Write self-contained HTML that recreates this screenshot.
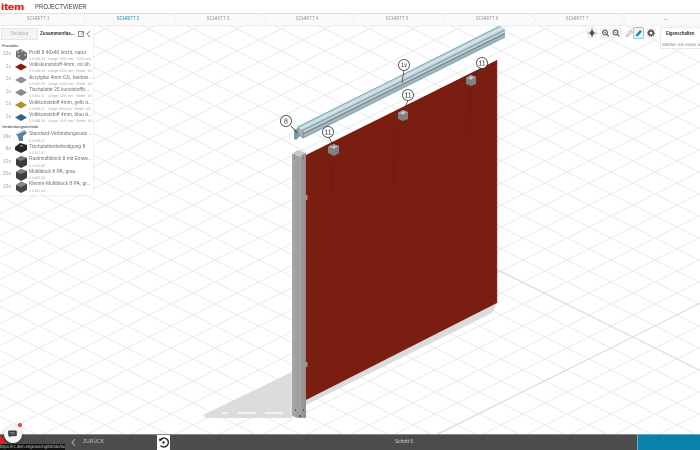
<!DOCTYPE html>
<html>
<head>
<meta charset="utf-8">
<style>
html,body{margin:0;padding:0;width:700px;height:450px;overflow:hidden;background:#fff;font-family:"Liberation Sans",sans-serif}
.a{position:absolute;white-space:nowrap}
#stage{position:absolute;left:0;top:0;width:700px;height:450px;overflow:hidden}
.tab{position:absolute;top:16px;width:60px;text-align:center;font-size:5.2px;color:#909090;line-height:7px;transform:scaleX(.85)}
.q{position:absolute;width:11px;left:0;text-align:right;font-size:5.2px;color:#a0a0a0;line-height:7px}
.t{position:absolute;left:29px;font-size:5.7px;color:#6e6e6e;line-height:7px;white-space:nowrap;width:72px;overflow:hidden;transform-origin:0 50%;transform:scaleX(.87)}
.s{position:absolute;left:29px;font-size:3.4px;color:#a8a8a8;line-height:4px;white-space:nowrap;width:63px;overflow:hidden}
.h{position:absolute;left:2px;font-size:3.8px;font-weight:bold;color:#666;line-height:5px}
</style>
</head>
<body>
<div id="stage">
<svg class="a" style="left:0;top:0" width="700" height="450" viewBox="0 0 700 450">
<defs>
<pattern id="g" patternUnits="userSpaceOnUse" x="633" y="337" width="44" height="22">
<path d="M0 0L44 22M0 22L44 0" stroke="#e7e7e7" stroke-width=".8" fill="none"/>
</pattern>
<linearGradient id="post" x1="0" x2="1" y1="0" y2="0">
<stop offset="0" stop-color="#a6a7a8"/><stop offset=".5" stop-color="#9c9d9e"/><stop offset="1" stop-color="#909192"/>
</linearGradient>
</defs>
<rect width="700" height="450" fill="#fff"/>
<rect width="700" height="450" fill="url(#g)"/>
<path d="M497 270L633 337L700 370.500M425 440L633 337L700 303" stroke="#d6d6d6" stroke-width=".8" fill="none"/>
<!-- shadows -->
<path d="M292 372L203 415L206 418L292 418Z" fill="#dcdcdc"/>
<path d="M306 400L306 405L492 313L497 303Z" fill="#dcdcdc"/>
<path d="M222 413h6M238 413h18M265 413h18" stroke="#fff" stroke-width="1.2"/>
<!-- panel -->
<path d="M306 155L497 60L497 303L306 400Z" fill="#7b1e12"/>
<path d="M497 60L497 303" stroke="#8f3a2e" stroke-width=".5"/>
<path d="M395 125L394 190M470 88L469 140M333 160L332 195" stroke="#6a170d" stroke-width="4" opacity=".25"/>
<!-- post -->
<path d="M292 154L298 150L306 153L306 418L298 418L292 416Z" fill="url(#post)"/>
<path d="M292 154L298 150L306 153L300 157Z" fill="#c7c8c9"/>
<path d="M300 157L300 418" stroke="#b6b7b8" stroke-width=".6"/>
<path d="M294 155h1M303 155h1M294 158h1M303 158h1" stroke="#555" stroke-width="1"/>
<rect x="305" y="195" width="2.5" height="5" fill="#999"/>
<rect x="305" y="362" width="2.5" height="5" fill="#999"/>
<path d="M295 410h1M303 410h1M299 416h2" stroke="#444" stroke-width="1.4"/>
<!-- rail -->
<path d="M298 127L500 26L505 30L505 37L304 138L298 134Z" fill="#a9b3b8"/>
<path d="M298 127L500 26L505 29L303 130Z" fill="#c9d5da"/>
<path d="M298 127L500 26M303 130L505 30M303 138L505 37" stroke="#6fadc2" stroke-width="1" fill="none"/>
<path d="M303 134L505 33.500" stroke="#7a8489" stroke-width="1"/>
<path d="M303 132L505 31.500" stroke="#dde4e7" stroke-width=".8"/>
<path d="M300.500 128.800L502.500 27.800" stroke="#f2f6f7" stroke-width=".6"/>
<path d="M303 130L303 138M298 127L298 134L303 138" stroke="#6b8994" stroke-width=".8" fill="none"/>
<!-- bracket near 8 -->
<path d="M294 130L298 128L300 136L296 140L294 139Z" fill="#7f98a5"/>
<!-- blocks -->
<path d="M328 147L333 144L339 146L339 153L334 156L328 153Z" fill="#7e8082"/><path d="M328 147L333 144L339 146L334 149Z" fill="#a8aaac"/><path d="M333 147h2" stroke="#eee" stroke-width="1"/>
<path d="M398 113L403 110L408 112L408 119L403 121L398 119Z" fill="#7e8082"/><path d="M398 113L403 110L408 112L403 115Z" fill="#a8aaac"/><path d="M402 113h2" stroke="#eee" stroke-width="1"/>
<path d="M466 78L471 75L476 77L476 84L471 86L466 84Z" fill="#7e8082"/><path d="M466 78L471 75L476 77L471 80Z" fill="#a8aaac"/><path d="M470 78h2" stroke="#eee" stroke-width="1"/>
<!-- callout leaders -->
<path d="M291 126L297 133M329 137L333 146M404 70L402 83M408 100L404 110M481 68L473 76" stroke="#333" stroke-width=".7" fill="none"/>
<g fill="#fff" stroke="#444" stroke-width=".8">
<circle cx="286" cy="121" r="5.500"/><circle cx="328" cy="132" r="5.500"/><circle cx="404" cy="65" r="5.500"/><circle cx="408" cy="95" r="5.500"/><circle cx="482" cy="63" r="5.500"/>
</g>
<g font-family="Liberation Sans,sans-serif" font-size="7" fill="#333" text-anchor="middle">
<text x="286" y="123.500">8</text><text x="328" y="134.500">11</text><text x="404" y="67" font-size="6">1v</text><text x="408" y="97.500">11</text><text x="482" y="65.500">11</text>
</g>
</svg>

<!-- header -->
<div class="a" style="left:0;top:0;width:700px;height:13px;background:#fff"></div>
<div class="a" style="left:1px;top:1px;font-size:9px;font-weight:bold;color:#e2231a;line-height:12px;-webkit-text-stroke:.3px #e2231a;transform-origin:0 50%;transform:scaleX(1.25)">item</div>
<div class="a" style="left:35px;top:2px;font-size:7.500px;color:#444;line-height:10px;transform-origin:0 50%;transform:scaleX(.8)">PROJECTVIEWER</div>

<!-- tabs -->
<div class="a" style="left:0;top:13px;width:700px;height:12px;background:#fafafa;border-top:1px solid #dedede;box-shadow:0 1px 1px #eee;box-sizing:border-box"></div>
<svg class="a" style="left:0;top:13px" width="700" height="13"><path d="M82 0.500L87 6L82 12M172 0.500L177 6L172 12M262 0.500L267 6L262 12M351 0.500L356 6L351 12M441 0.500L446 6L441 12M531 0.500L536 6L531 12M621 0.500L626 6L621 12" stroke="#ececec" stroke-width=".8" fill="none"/></svg>
<div class="tab" style="left:8px">SCHRITT 1</div>
<div class="tab" style="left:98px;color:#1a8aa8">SCHRITT 2</div>
<div class="tab" style="left:188px">SCHRITT 3</div>
<div class="tab" style="left:277px">SCHRITT 4</div>
<div class="tab" style="left:367px">SCHRITT 5</div>
<div class="tab" style="left:457px">SCHRITT 6</div>
<div class="tab" style="left:547px">SCHRITT 7</div>
<div class="tab" style="left:636px;font-weight:bold">...</div>

<!-- left panel -->
<div class="a" style="left:0;top:26px;width:93px;height:169px;background:#fff;box-shadow:0 0 2px #ddd"></div>
<div class="a" style="left:1px;top:28px;width:37px;height:12px;background:#f4f4f4;border:1px solid #e6e6e6;box-sizing:border-box;text-align:center;font-size:5.2px;line-height:10px;color:#aaa">Struktur</div>
<div class="a" style="left:40px;top:31px;font-size:5.400px;font-weight:bold;color:#333;line-height:7px;transform-origin:0 50%;transform:scaleX(.85)">Zusammenfas...</div>
<svg class="a" style="left:77px;top:30px" width="16" height="8"><path d="M1.500 1.500h5v5h-5zM4 4.500l3-3" stroke="#666" stroke-width=".7" fill="none"/><path d="M13 1L10 4L13 7" stroke="#777" stroke-width=".8" fill="none"/></svg>
<div class="h" style="top:44px">Produkte</div>
<div class="q" style="top:51px">12x</div><div class="t" style="top:49.500px">Profil 8 40x40 leicht, natur</div><div class="s" style="top:56.500px">0.0.026.33 · Länge: 1000 mm · 1000 mm</div>
<div class="q" style="top:63.500px">1x</div><div class="t" style="top:62px">Volkskunststoff 4mm, rot äh...</div><div class="s" style="top:69px">0.0.428.40 · Länge: 1000 mm · Breite: 100</div>
<div class="q" style="top:76px">1x</div><div class="t" style="top:74.500px">Acrylglas 4mm GS, beidsei...</div><div class="s" style="top:81.500px">0.0.492.30 · Länge: 1000 mm · Breite: 100</div>
<div class="q" style="top:88.500px">1x</div><div class="t" style="top:87px">Tischplatte 25 kunststoffb...</div><div class="s" style="top:94px">0.0.661.07 · Länge: 1200 mm · Breite: 100</div>
<div class="q" style="top:101px">1x</div><div class="t" style="top:99.500px">Volkkunststoff 4mm, gelb ä...</div><div class="s" style="top:106.500px">0.0.688.27 · Länge: 868 mm · Breite: 100</div>
<div class="q" style="top:113.500px">1x</div><div class="t" style="top:112px">Volkkunststoff 4mm, blau ä...</div><div class="s" style="top:119px">0.0.688.26 · Länge: 1000 mm · Breite: 100</div>
<div class="h" style="top:125px">Verbindungstechnik</div>
<div class="q" style="top:134px">16x</div><div class="t" style="top:131px">Standard-Verbindungssatz ...</div><div class="s" style="top:138.500px">0.0.026.07</div>
<div class="q" style="top:146px">8x</div><div class="t" style="top:143.500px">Tischplattenbefestigung 8</div><div class="s" style="top:151px">0.0.617.87</div>
<div class="q" style="top:158.500px">12x</div><div class="t" style="top:156px">Rastmultiblock 8 mit Einwe...</div><div class="s" style="top:163.500px">0.0.420.85</div>
<div class="q" style="top:171px">25x</div><div class="t" style="top:168.500px">Multiblock 8 PA, grau</div><div class="s" style="top:176px">0.0.600.28</div>
<div class="q" style="top:183.500px">12x</div><div class="t" style="top:181px">Klemm-Multiblock 8 PA, gr...</div><div class="s" style="top:188.500px">0.0.641.40</div>
<svg class="a" style="left:14px;top:48px" width="15" height="146" viewBox="14 48 15 146">
<path d="M16 51L21 49L27 53L27 58L23 61L16 57Z" fill="#6e7072"/><path d="M17 52h2M21 51h2M24 55h2M18 56h2" stroke="#ccc" stroke-width="1.200"/>
<path d="M15 67L21 63.500L27 67L21 70.500Z" fill="#8b1a12"/>
<path d="M15 80L21 76.500L27 80L21 83.500Z" fill="#909293"/>
<path d="M15 92.500L21 89L27 92.500L21 96Z" fill="#87898b"/>
<path d="M15 105L21 101.500L27 105L21 108.500Z" fill="#b4901c"/>
<path d="M15 117.500L21 114L27 117.500L21 121Z" fill="#2f6484"/>
<path d="M16 134L24 130L27 133L23 136L23 141L19 141L18 137Z" fill="#5d7f96"/><path d="M17 134l7-3" stroke="#ccd" stroke-width="1"/>
<path d="M15 147L20 143L27 145L27 150L21 153L15 150Z" fill="#24272a"/><path d="M20 146h3" stroke="#aaa" stroke-width="1"/>
<path d="M16 159L21 156L27 158L27 165L21 168L16 165Z" fill="#3b3d3f"/><path d="M16 159L21 156L27 158L21 161Z" fill="#77797b"/>
<path d="M16 172L21 169L27 171L27 178L21 181L16 178Z" fill="#3f4143"/><path d="M16 172L21 169L27 171L21 174Z" fill="#7b7d7f"/>
<path d="M16 185L21 181.500L27 184L27 190L21 193L16 190Z" fill="#45484a"/><path d="M16 185L21 181.500L27 184L21 187Z" fill="#85888a"/>
</svg>

<!-- toolbar -->
<svg class="a" style="left:586px;top:26px" width="74" height="15" viewBox="586 26 74 15">
<rect x="587" y="28" width="10" height="10" rx="1" fill="#f3f3f3"/>
<path d="M592 29.500L594.500 33L592 36.500L589.500 33Z" fill="#444"/><path d="M592 28.500v9M587.500 33h9" stroke="#555" stroke-width=".6"/>
<rect x="600" y="28" width="22" height="10" rx="1" fill="#f3f3f3"/>
<circle cx="605" cy="32.500" r="2.400" fill="none" stroke="#444" stroke-width="1"/><path d="M607 34.500l1.800 1.800" stroke="#444" stroke-width="1"/><path d="M604 32.500h2M605 31.500v2" stroke="#444" stroke-width=".5"/>
<circle cx="615.500" cy="32.500" r="2.400" fill="none" stroke="#444" stroke-width="1"/><path d="M617.500 34.500l1.800 1.800" stroke="#444" stroke-width="1"/><path d="M614.500 32.500h2" stroke="#444" stroke-width=".5"/>
<path d="M626 36L631 30.500L632.500 32L627.500 36.500Z" fill="none" stroke="#aaa" stroke-width=".8"/>
<rect x="633.500" y="27.500" width="10" height="11" rx="1" fill="#e9f4f8" stroke="#79b8cf" stroke-width=".7"/>
<path d="M635.500 35.500L640 30L642 31.500L637.500 36.500Z" fill="#1a7fa6"/>
<rect x="646" y="28" width="10" height="10" rx="1" fill="#f3f3f3"/>
<circle cx="651" cy="33" r="2.200" fill="none" stroke="#333" stroke-width="1.300"/><circle cx="651" cy="33" r="3.300" fill="none" stroke="#333" stroke-width=".9" stroke-dasharray="1 1"/>
</svg>
<div class="a" style="left:660px;top:27px;width:40px;height:22px;background:#fff;border:1px solid #eaeaea;border-right:0;box-sizing:border-box;border-radius:2px 0 0 2px"></div>
<div class="a" style="left:666px;top:31px;font-size:5.200px;font-weight:bold;color:#333;line-height:7px;transform-origin:0 50%;transform:scaleX(.8)">Eigenschaften</div>
<div class="a" style="left:662px;top:42px;font-size:4.300px;color:#888;line-height:6px">Wählen Sie etwas aus</div>

<!-- bottom bar -->
<div class="a" style="left:0;top:434px;width:700px;height:16px;background:#4c4c4c;border-top:1px solid #888;box-sizing:border-box"></div>
<div class="a" style="left:637px;top:434px;width:63px;height:16px;background:#0a80aa;border-top:1px solid #5fa9c4;border-left:1px solid #7aa;box-sizing:border-box"></div>
<svg class="a" style="left:0;top:434px" width="80" height="16"><path d="M0 1L9 12H0Z" fill="#e2231a"/><path d="M75 5L72 8.500L75 12" stroke="#bbb" stroke-width=".9" fill="none"/></svg>
<div class="a" style="left:83px;top:439px;font-size:5.500px;color:#c4c4c4;line-height:7px;letter-spacing:.1px;transform-origin:0 50%;transform:scaleX(.9)">ZURÜCK</div>
<div class="a" style="left:157px;top:435px;width:13px;height:15px;background:#fff"></div>
<svg class="a" style="left:157px;top:435px" width="13" height="15"><path d="M3.500 4.500A4.500 4.500 0 1 1 3.500 10.500" stroke="#222" stroke-width="1.300" fill="none"/><path d="M2 3.500L6 4.500L2.500 6.500Z" fill="#222"/><circle cx="6.500" cy="7.500" r="1.200" fill="#222"/></svg>
<div class="a" style="left:384px;top:439px;width:40px;text-align:center;font-size:5px;color:#ddd;line-height:7px">Schritt 5</div>
<div class="a" style="left:0;top:444px;width:65px;height:6px;background:#111;color:#ccc;font-size:4.100px;line-height:6px;overflow:hidden">https://rc.item.engineering/DE/de/tools/</div>

<!-- chat -->
<div class="a" style="left:4px;top:425px;width:18px;height:18px;border-radius:50%;background:#f5f5f5;box-shadow:0 1px 3px rgba(0,0,0,.3)"></div>
<svg class="a" style="left:8px;top:430px" width="10" height="8"><path d="M1 .5h7a.8.8 0 0 1 .8.8v4a.8.8 0 0 1-.8.8H3.500L1.500 7.500V6H1a.8.8 0 0 1-.8-.8v-4A.8.8 0 0 1 1 .5Z" fill="#3a3f45"/><path d="M2 2.300h5M2 4h5" stroke="#bbb" stroke-width=".5"/></svg>
<div class="a" style="left:18px;top:423px;width:4px;height:4px;border-radius:50%;background:#d8443a"></div>
</div>
</body>
</html>
